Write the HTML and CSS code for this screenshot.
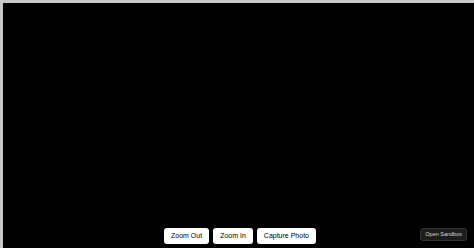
FILE: index.html
```html
<!DOCTYPE html>
<html>
<head>
<meta charset="utf-8">
<link rel="stylesheet" href="styles.css">
</head>
<body>
<div class="stage">
  <div class="controls">
    <button class="btn">Zoom Out</button>
    <button class="btn">Zoom In</button>
    <button class="btn">Capture Photo</button>
  </div>
  <button class="sandbox">Open Sandbox</button>
</div>
</body>
</html>
```
FILE: styles.css
```css
html, body {
  margin: 0;
  padding: 0;
  height: 100%;
}
body {
  background: #c8c8c8;
  padding: 3px 0 0 3px;
  box-sizing: border-box;
  font-family: "Liberation Sans", Arial, sans-serif;
}
.stage {
  position: relative;
  background: #000;
  height: 100%;
  display: flex;
  flex-direction: column;
  justify-content: flex-end;
}
.controls {
  display: flex;
  justify-content: center;
  gap: 4px;
  padding: 0 0 4px 3px;
}
.btn {
  background: #fff;
  color: #000;
  border: none;
  border-radius: 3px;
  height: 16px;
  padding: 0 7px;
  font-family: "Liberation Sans", Arial, sans-serif;
  font-size: 7px;
  line-height: 16px;
}
.sandbox {
  position: absolute;
  right: 7px;
  bottom: 7px;
  height: 13px;
  padding: 0 4px;
  background: #1c1c1c;
  color: #d8d8d8;
  border: 1px solid #333;
  border-radius: 3px;
  font-family: "Liberation Sans", Arial, sans-serif;
  font-size: 5.5px;
  line-height: 11px;
}
```
